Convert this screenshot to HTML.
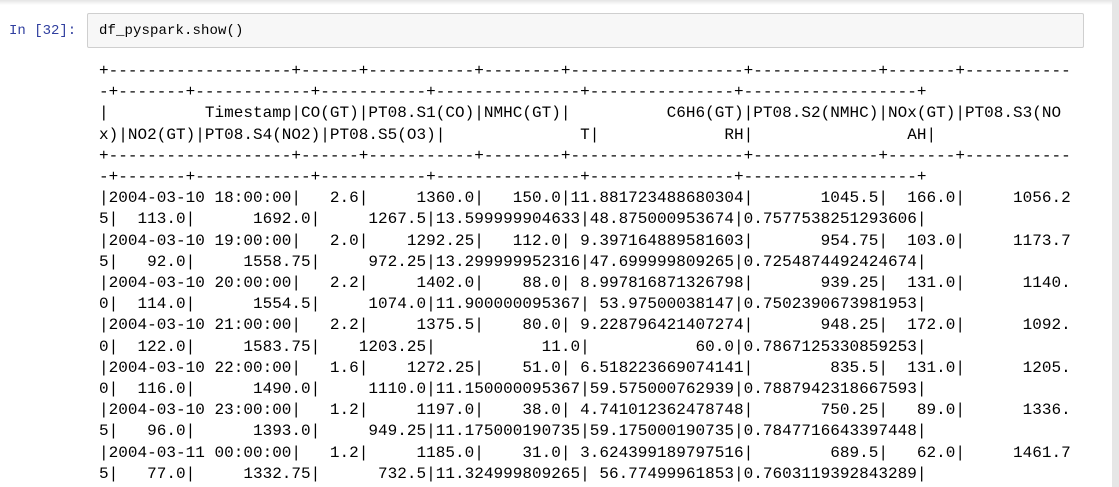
<!DOCTYPE html>
<html><head><meta charset="utf-8"><style>
html,body{margin:0;padding:0;background:#fff;width:1119px;height:487px;overflow:hidden;position:relative}
.top{position:absolute;left:0;top:0;width:1112px;height:5px;background:linear-gradient(#e4e4e4,#fff)}
.right{position:absolute;left:1112px;top:0;width:7px;height:487px;background:#e6e6e6}
.prompt{position:absolute;left:9px;top:21px;font:14px/20px "Liberation Mono",monospace;color:#303f9f}
.box{position:absolute;left:87px;top:13px;width:997px;height:35px;background:#f7f7f7;border:1px solid #cfcfcf;border-radius:2px;box-sizing:border-box}
.code{position:absolute;left:99px;top:21px;font:14px/20px "Liberation Mono",monospace;color:#000;letter-spacing:0.1px}
pre{position:absolute;left:99px;top:61px;margin:0;font:16px/21.2px "Liberation Mono",monospace;color:#000;letter-spacing:0.02px}
</style></head><body>
<div class="top"></div><div class="right"></div>
<div class="prompt">In [32]:</div>
<div class="box"></div>
<div class="code">df_pyspark.show()</div>
<pre>+-------------------+------+-----------+--------+------------------+-------------+-------+-----------
-+-------+------------+-----------+---------------+---------------+------------------+
|          Timestamp|CO(GT)|PT08.S1(CO)|NMHC(GT)|          C6H6(GT)|PT08.S2(NMHC)|NOx(GT)|PT08.S3(NO
x)|NO2(GT)|PT08.S4(NO2)|PT08.S5(O3)|              T|             RH|                AH|
+-------------------+------+-----------+--------+------------------+-------------+-------+-----------
-+-------+------------+-----------+---------------+---------------+------------------+
|2004-03-10 18:00:00|   2.6|     1360.0|   150.0|11.881723488680304|       1045.5|  166.0|     1056.2
5|  113.0|      1692.0|     1267.5|13.599999904633|48.875000953674|0.7577538251293606|
|2004-03-10 19:00:00|   2.0|    1292.25|   112.0| 9.397164889581603|       954.75|  103.0|     1173.7
5|   92.0|     1558.75|     972.25|13.299999952316|47.699999809265|0.7254874492424674|
|2004-03-10 20:00:00|   2.2|     1402.0|    88.0| 8.997816871326798|       939.25|  131.0|      1140.
0|  114.0|      1554.5|     1074.0|11.900000095367| 53.97500038147|0.7502390673981953|
|2004-03-10 21:00:00|   2.2|     1375.5|    80.0| 9.228796421407274|       948.25|  172.0|      1092.
0|  122.0|     1583.75|    1203.25|           11.0|           60.0|0.7867125330859253|
|2004-03-10 22:00:00|   1.6|    1272.25|    51.0| 6.518223669074141|        835.5|  131.0|      1205.
0|  116.0|      1490.0|     1110.0|11.150000095367|59.575000762939|0.7887942318667593|
|2004-03-10 23:00:00|   1.2|     1197.0|    38.0| 4.741012362478748|       750.25|   89.0|      1336.
5|   96.0|      1393.0|     949.25|11.175000190735|59.175000190735|0.7847716643397448|
|2004-03-11 00:00:00|   1.2|     1185.0|    31.0| 3.624399189797516|        689.5|   62.0|     1461.7
5|   77.0|     1332.75|      732.5|11.324999809265| 56.77499961853|0.7603119392843289|
|                   |      |           |        |                  |             |       |           </pre>
</body></html>
